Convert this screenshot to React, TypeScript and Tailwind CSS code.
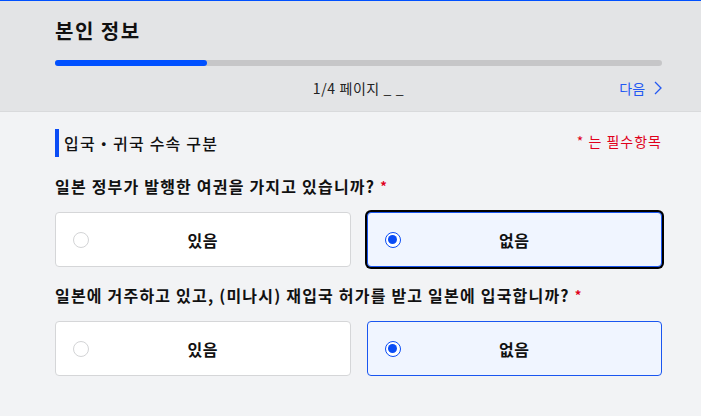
import React from "react";

const FONT = "font-['Noto_Sans_CJK_KR','Noto_Sans',sans-serif]";

interface Question {
  label: string;
  value: "yes" | "no";
  focused?: boolean;
}

const questions: Question[] = [
  { label: "일본 정부가 발행한 여권을 가지고 있습니까?", value: "no", focused: true },
  { label: "일본에 거주하고 있고, (미나시) 재입국 허가를 받고 일본에 입국합니까?", value: "no" },
];

function Radio({ checked }: { checked: boolean }) {
  if (checked) {
    return (
      <span className="flex h-4 w-4 items-center justify-center rounded-full border-[1.5px] border-[#0a4cf5] bg-white">
        <span className="h-[9px] w-[9px] rounded-full bg-[#0a4cf5]" />
      </span>
    );
  }
  return <span className="block h-4 w-4 rounded-full border border-[#d3d4d6] bg-white" />;
}

function OptionCard({ label, checked, focused }: { label: string; checked: boolean; focused?: boolean }) {
  return (
    <button
      type="button"
      className={`grid h-[55px] grid-cols-[1fr_auto_1fr] items-center rounded-[4px] border px-[17px] ${
        checked ? "border-[#1a56f0] bg-[#f0f5ff]" : "border-[#d5d6d8] bg-white"
      } ${focused ? "ring-2 ring-black" : ""}`}
    >
      <span className="justify-self-start">
        <Radio checked={checked} />
      </span>
      <span className="text-[16px] font-semibold leading-[22px] tracking-[0.5px] text-[#111]">{label}</span>
      <span />
    </button>
  );
}

export default function App() {
  return (
    <div className={`min-h-[416px] w-full bg-[#f2f3f5] ${FONT}`}>
      {/* header */}
      <div className="border-t border-b border-t-[#0050ff] border-b-[#d9dadc] bg-[#e3e4e6] pb-[13px] pl-[55px] pr-[39px] pt-[16px]">
        <h1 className="h-[28px] text-[20px] font-bold leading-[28px] tracking-[1.5px] text-[#111]">본인 정보</h1>
        <div className="mt-[15px] h-[6px] w-full rounded-full bg-[#c6c6c8]">
          <div className="h-full rounded-full bg-[#0050ff]" style={{ width: "25%" }} />
        </div>
        <div className="mt-[12px] flex h-[20px] items-center text-[14px] leading-[20px]">
          <div className="flex-1" />
          <span className="tracking-[0.6px] text-[#222]">1/4 페이지 _ _</span>
          <div className="flex flex-1 justify-end">
            <button type="button" className="flex items-center gap-[9px] text-[#2459f2]">
              다음
              <svg width="8" height="14" viewBox="0 0 8 14" fill="none">
                <polyline points="1,1 7,7 1,13" stroke="#2459f2" strokeWidth="1.3" />
              </svg>
            </button>
          </div>
        </div>
      </div>

      {/* body */}
      <div className="pb-10 pl-[55px] pr-[39px] pt-[17px]">
        <div className="flex h-[28px] items-center justify-between">
          <div className="flex h-[28px] items-center border-l-4 border-[#0a4cf5] pl-[5px] text-[16px] font-medium leading-[28px] tracking-[1.2px] text-[#111]">
            입국・귀국 수속 구분
          </div>
          <span className="-mt-[4px] text-[14px] leading-[20px] tracking-[1px] text-[#e0001b]">* 는 필수항목</span>
        </div>

        {questions.map((q, i) => (
          <div key={i} className={i === 0 ? "mt-[18px]" : "mt-[17px]"}>
            <p className="flex h-[22px] items-center gap-[5px] text-[16px] font-semibold leading-[22px] tracking-[1.2px] text-[#111]">
              <span>{q.label}</span>
              <span className="text-[13px] leading-[22px] text-[#e0001b]">*</span>
            </p>
            <div className="mt-[15px] grid grid-cols-2 gap-4">
              <OptionCard label="있음" checked={q.value === "yes"} />
              <OptionCard label="없음" checked={q.value === "no"} focused={q.focused} />
            </div>
          </div>
        ))}
      </div>
    </div>
  );
}
